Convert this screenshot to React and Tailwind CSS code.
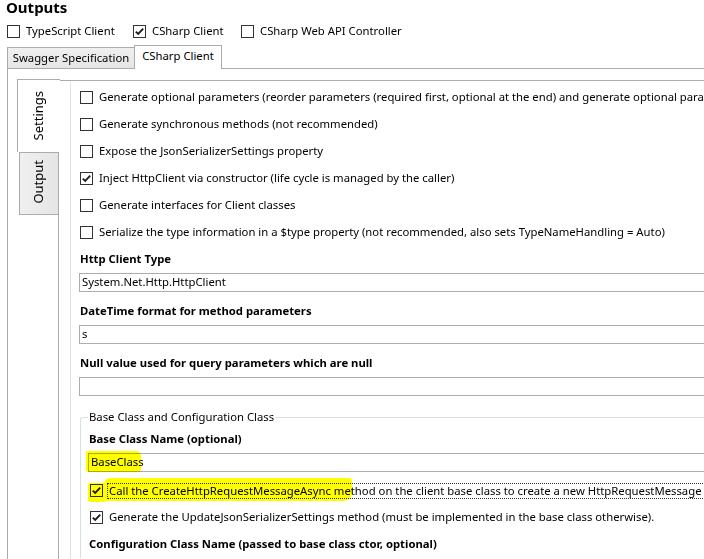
import React from "react";

function Box({ checked }) {
	return (
		<span className="w-[13px] h-[13px] shrink-0 border border-[#333] bg-white flex items-center justify-center">
			{checked && (
				<svg width="11" height="11" viewBox="0 0 11 11">
					<path d="M1.8 5.6 L4.2 8 L9.2 2.6" fill="none" stroke="#1f1f1f" strokeWidth="1.9" />
				</svg>
			)}
		</span>
	);
}

function CheckRow({ checked, children }) {
	return (
		<div className="h-[27px] flex items-center">
			<Box checked={checked} />
			<span className="ml-[6px]">{children}</span>
		</div>
	);
}

function Label({ children }) {
	return <div className="h-[27px] flex items-center font-bold">{children}</div>;
}

function TextBox({ value }) {
	return (
		<div className="h-[19px] -ml-px border border-[#abadb3] pl-[2px] flex items-center">{value}</div>
	);
}

const options = [
	[false, "Generate optional parameters (reorder parameters (required first, optional at the end) and generate optional parameters)"],
	[false, "Generate synchronous methods (not recommended)"],
	[false, "Expose the JsonSerializerSettings property"],
	[true, "Inject HttpClient via constructor (life cycle is managed by the caller)"],
	[false, "Generate interfaces for Client classes"],
	[false, "Serialize the type information in a $type property (not recommended, also sets TypeNameHandling = Auto)"],
];

export default function App() {
	return (
		<div className="w-[704px] h-[559px] overflow-hidden bg-white text-black text-[11.3px] font-['Noto_Sans',sans-serif] whitespace-nowrap">
			<div className="w-[860px] h-full flex flex-col">
				<div className="pl-[6px] h-[20px] text-[15px] font-bold leading-[15px]">Outputs</div>

				<div className="h-[22px] pl-[7px] flex items-center">
					<div className="w-[126px] flex items-center">
						<Box />
						<span className="ml-[6px]">TypeScript Client</span>
					</div>
					<div className="w-[108px] flex items-center">
						<Box checked />
						<span className="ml-[6px]">CSharp Client</span>
					</div>
					<div className="flex items-center">
						<Box />
						<span className="ml-[6px]">CSharp Web API Controller</span>
					</div>
				</div>

				<div className="h-[26px] pl-[7px] flex items-end">
					<div className="w-[128px] h-[21px] border border-b-0 border-[#acacac] bg-linear-to-b from-[#f0f0f0] to-[#e5e5e5] flex items-center justify-center">
						Swagger Specification
					</div>
					<div className="relative z-10 -ml-px -mb-px w-[88px] h-[24px] border border-b-0 border-[#acacac] bg-white flex items-center justify-center pb-[2px]">
						CSharp Client
					</div>
				</div>

				<div className="flex-1 ml-[7px] border-l border-t border-[#acacac] pl-[9px] pt-[10px] flex">
					<div className="w-[41px] shrink-0 flex flex-col items-start">
						<div className="relative z-10 w-[43px] h-[73px] bg-white border-l border-t border-[#acacac] flex items-center justify-center">
							<span className="[writing-mode:vertical-rl] rotate-180 text-[13px]">Settings</span>
						</div>
						<div className="ml-[2px] w-[39px] h-[63px] border-l border-t border-b border-[#acacac] bg-linear-to-r from-[#f0f0f0] to-[#e5e5e5] flex items-center justify-center pb-[4px]">
							<span className="[writing-mode:vertical-rl] rotate-180 text-[13px]">Output</span>
						</div>
					</div>

					<div className="flex-1 mt-[1px] border-l border-t border-[#acacac] pl-[11px] pt-[1px] flex">
						<div className="flex-1 border-l border-[#dde4ec] pl-[9px] pt-[2px]">
							{options.map(([checked, text]) => (
								<CheckRow key={text} checked={checked}>{text}</CheckRow>
							))}

							<Label>Http Client Type</Label>
							<TextBox value="System.Net.Http.HttpClient" />
							<div className="h-[6px]" />
							<Label>DateTime format for method parameters</Label>
							<TextBox value="s" />
							<div className="h-[6px]" />
							<Label>Null value used for query parameters which are null</Label>
							<TextBox value="" />

							<fieldset className="mt-[13px] border-l border-t border-[#d5dfe5] rounded-tl-[3px] pl-[7px]">
								<legend className="px-[1px] leading-[16px]">Base Class and Configuration Class</legend>
								<div className="pl-[1px] pt-[1px]">
									<Label>Base Class Name (optional)</Label>
								</div>
								<div className="relative">
									<div className="h-[19px] border border-[#abadb3] pl-[2px] flex items-center">BaseClass</div>
									<div className="absolute left-[-2px] top-[-2px] w-[55px] h-[21px] rounded-[2px] rounded-tr-[5px] bg-[#ffff00] mix-blend-multiply" />
								</div>
								<div className="relative mt-[5px] h-[27px] flex items-center pl-[2px]">
									<Box checked />
									<span className="ml-[4px] border border-dotted border-[#333] pl-[1px] pr-[200px] leading-[14px]">
										Call the CreateHttpRequestMessageAsync method on the client base class to create a new HttpRequestMessage
									</span>
									<div className="absolute left-0 top-[6px] w-[18px] h-[19px] bg-[#ffff00] mix-blend-multiply rounded-[2px]" />
									<div className="absolute left-[16px] top-[1px] w-[248px] h-[23px] bg-[#ffff00] mix-blend-multiply rounded-tl-[6px] rounded-tr-[3px] rounded-br-[8px]" />
								</div>
								<div className="h-[27px] flex items-center pl-[2px]">
									<Box checked />
									<span className="ml-[6px]">
										Generate the UpdateJsonSerializerSettings method (must be implemented in the base class otherwise).
									</span>
								</div>
								<div className="pl-[1px]">
									<Label>Configuration Class Name (passed to base class ctor, optional)</Label>
								</div>
							</fieldset>
						</div>
					</div>
				</div>
			</div>
		</div>
	);
}
